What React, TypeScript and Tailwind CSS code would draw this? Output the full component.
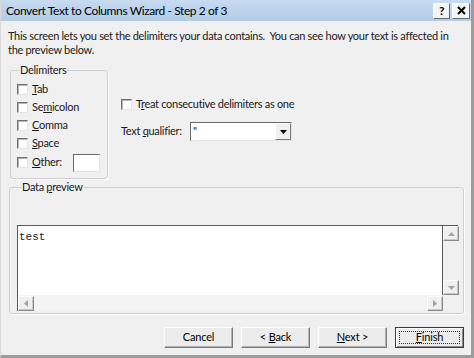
import React from "react";

const ui = { fontFamily: 'Lato, "Open Sans", sans-serif' };

function Check() {
  return (
    <span className="block w-[11px] h-[11px] shrink-0 bg-white border border-t-[#707070] border-l-[#707070] border-r-[#e3e3e3] border-b-[#e3e3e3] shadow-[inset_1px_1px_0_#b4b4b4]" />
  );
}

function Arrow({ dir, color = "#a3a3a3" }: { dir: "up" | "down" | "left" | "right"; color?: string }) {
  const pts = {
    up: "0,4 3.5,0 7,4",
    down: "0,0 7,0 3.5,4",
    left: "4,0 4,7 0,3.5",
    right: "0,0 4,3.5 0,7",
  }[dir];
  const v = dir === "up" || dir === "down";
  return (
    <svg width={v ? 7 : 4} height={v ? 4 : 7} viewBox={v ? "0 0 7 4" : "0 0 4 7"}>
      <polygon points={pts} fill={color} />
    </svg>
  );
}

function ScrollBtn({ dir }: { dir: "up" | "down" | "left" | "right" }) {
  return (
    <div className="w-[16px] h-[15px] flex items-center justify-center bg-[#f0f0f0] border border-t-white border-l-white border-r-[#8a8a8a] border-b-[#8a8a8a] shadow-[inset_-1px_-1px_0_#c8c8c8]">
      <Arrow dir={dir} />
    </div>
  );
}

function Btn({ children, focus }: { children: React.ReactNode; focus?: boolean }) {
  return (
    <div
      className={
        "w-[69px] h-[21px] flex items-center justify-center text-[11px] tracking-[-0.2px] text-black bg-[#ececec] " +
        (focus
          ? "border border-[#3c3c3c] shadow-[inset_1px_1px_0_#ffffff,inset_-1px_-1px_0_#8a8a8a] p-[3px]"
          : "border border-t-white border-l-white border-r-[#7a7a7a] border-b-[#7a7a7a] shadow-[inset_-1px_-1px_0_#b4b4b4]")
      }
    >
      {focus ? (
        <span className="w-full h-full flex items-center justify-center border border-dotted border-[#333]">
          <span>{children}</span>
        </span>
      ) : (
        <span>{children}</span>
      )}
    </div>
  );
}

function Row({ label }: { label: React.ReactNode }) {
  return (
    <div className="h-[18px] flex items-center gap-[4px]">
      <Check />
      <span>{label}</span>
    </div>
  );
}

export default function App() {
  return (
    <div
      style={ui}
      className="w-[474px] h-[358px] bg-[#f0f0f0] text-[11px] tracking-[-0.3px] text-[#1a1a1a] flex flex-col border-r-[3px] border-b-[3px] border-l border-r-[#9c9c9c] border-b-[#9c9c9c] border-l-[#dadada] overflow-hidden"
    >
      {/* title bar */}
      <div className="h-[21px] shrink-0 flex items-center pl-[5px] pr-[1px] bg-gradient-to-b from-[#c7dbf1] to-[#b4cce7]">
        <span className="text-[12px] tracking-[-0.4px] text-black">Convert Text to Columns Wizard - Step 2 of 3</span>
        <div className="ml-auto flex gap-[2px]">
          <div className="w-[17px] h-[16px] flex items-center justify-center bg-[#f4f4f4] border border-t-white border-l-white border-r-[#6a6a6a] border-b-[#6a6a6a] text-[12px] font-bold text-black leading-none">
            ?
          </div>
          <div className="w-[18px] h-[16px] flex items-center justify-center bg-[#f4f4f4] border border-t-white border-l-white border-r-[#6a6a6a] border-b-[#6a6a6a]">
            <svg width="9" height="9" viewBox="0 0 9 9">
              <path d="M1 1 L8 8 M8 1 L1 8" stroke="#000" strokeWidth="2" />
            </svg>
          </div>
        </div>
      </div>

      {/* description */}
      <p className="mt-[8px] px-[7px] leading-[14px]">
        This screen lets you set the delimiters your data contains.&nbsp; You can see how your text is affected in the
        preview below.
      </p>

      {/* delimiters + options */}
      <div className="mt-[6px] flex pl-[9px]">
        <fieldset className="w-[98px] h-[116px] border border-[#cfcfcf] rounded-[3px] pl-[6px] pt-[3px] shadow-[1px_1px_0_#ffffff]">
          <legend className="ml-[2px] px-[1px] leading-[14px]">Delimiters</legend>
          <Row label={<><u>T</u>ab</>} />
          <Row label={<>Se<u>m</u>icolon</>} />
          <Row label={<><u>C</u>omma</>} />
          <Row label={<><u>S</u>pace</>} />
          <div className="h-[21px] flex items-center gap-[4px]">
            <Check />
            <span><u>O</u>ther:</span>
            <span className="ml-[7px] w-[27px] h-[18px] bg-white border border-t-[#6a6a6a] border-l-[#6a6a6a] border-r-[#e3e3e3] border-b-[#e3e3e3]" />
          </div>
        </fieldset>

        <div className="ml-[13px] pt-[34px] flex flex-col">
          <div className="h-[14px] flex items-center gap-[4px]">
            <Check />
            <span className="whitespace-nowrap">T<u>r</u>eat consecutive delimiters as one</span>
          </div>
          <div className="mt-[11px] flex items-center">
            <span className="w-[69px] whitespace-nowrap">Text <u>q</u>ualifier:</span>
            <div className="w-[102px] h-[19px] flex bg-white border border-t-[#6a6a6a] border-l-[#6a6a6a] border-r-[#e3e3e3] border-b-[#e3e3e3]">
              <span className="pl-[2px] leading-[16px]">"</span>
              <div className="ml-auto w-[16px] h-full flex items-center justify-center bg-[#f0f0f0] border border-t-white border-l-white border-r-[#7a7a7a] border-b-[#7a7a7a]">
                <Arrow dir="down" color="#000" />
              </div>
            </div>
          </div>
        </div>
      </div>

      {/* data preview */}
      <fieldset className="mt-[1px] ml-[8px] w-[455px] h-[134px] border border-[#cfcfcf] rounded-[3px] pl-[7px] shadow-[1px_1px_0_#ffffff]">
        <legend className="ml-[4px] px-[1px] leading-[14px]">
          Data <u>p</u>review
        </legend>
        <div className="mt-[31px] w-[441px] grid grid-cols-[425px_16px] grid-rows-[69px_16px] border-l border-t border-l-[#5a5a5a] border-t-[#5a5a5a]">
          <div className="bg-white border-r border-r-[#5a5a5a] pl-[1px] pt-[2px]">
            <span className="text-[11px] tracking-normal leading-[13px]" style={{ fontFamily: '"Liberation Mono", monospace' }}>
              test
            </span>
          </div>
          <div className="flex flex-col justify-between bg-[#f0f0f0]">
            <ScrollBtn dir="up" />
            <ScrollBtn dir="down" />
          </div>
          <div className="flex justify-between items-end bg-[#f4f4f4]">
            <ScrollBtn dir="left" />
            <ScrollBtn dir="right" />
          </div>
          <div className="bg-[#f0f0f0]" />
        </div>
      </fieldset>

      {/* buttons */}
      <div className="mt-[13px] flex justify-end gap-[8px] pr-[7px]">
        <Btn>Cancel</Btn>
        <Btn>
          &lt; <u>B</u>ack
        </Btn>
        <Btn>
          <u>N</u>ext &gt;
        </Btn>
        <Btn focus>
          <u>F</u>inish
        </Btn>
      </div>
    </div>
  );
}
